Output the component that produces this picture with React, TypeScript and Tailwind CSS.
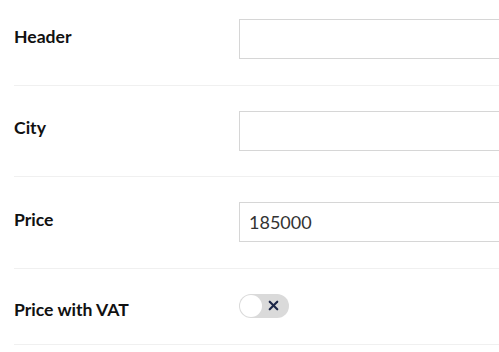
import { X } from "lucide-react";

function Field({ label, value }: { label: string; value?: string }) {
  return (
    <div className="flex items-center border-b border-[#f0f0f0] pt-[25px] pb-[25.5px]">
      <label className="w-[225px] shrink-0 -translate-y-[2px] text-[17.6px] font-bold text-[#111]">{label}</label>
      <input
        type="text"
        defaultValue={value}
        className="h-[40px] flex-1 border border-[#d6d6d6] bg-white px-[9px] text-[18px] text-[#333] outline-none"
      />
    </div>
  );
}

export default function App() {
  return (
    <div className="min-h-screen bg-white font-['Lato',sans-serif] overflow-hidden">
      <div className="-mt-[6px] pl-[14px] -mr-[20px]">
        <Field label="Header" />
        <Field label="City" />
        <Field label="Price" value="185000" />
        <div className="flex items-center border-b border-[#f0f0f0] pt-[25px] pb-[26px]">
          <label className="w-[225px] shrink-0 h-[24px] leading-[24px] translate-y-[4px] text-[17.6px] font-bold text-[#111]">
            Price with VAT
          </label>
          <button className="relative flex h-[24px] w-[50px] items-center rounded-full bg-[#dadada]">
            <span className="absolute left-[1px] top-[1px] h-[22px] w-[22px] rounded-full bg-white" />
            <X className="absolute left-[27px] h-[15px] w-[15px] text-[#1c2748]" strokeWidth={3.5} />
          </button>
        </div>
      </div>
    </div>
  );
}
